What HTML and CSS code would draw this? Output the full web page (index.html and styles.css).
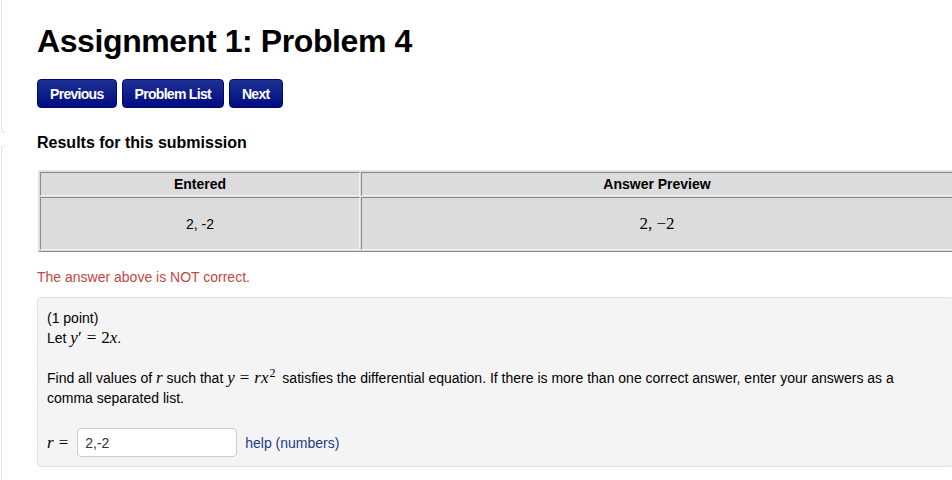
FILE: index.html
```html
<!DOCTYPE html>
<html lang="en">
<head>
<meta charset="utf-8">
<title>Assignment 1: Problem 4</title>
<link rel="stylesheet" href="styles.css">
</head>
<body>
<div class="page">
  <div class="rail">
    <div class="rail-top"></div>
    <div class="rail-bottom"></div>
  </div>
  <main class="content">
    <h1 class="title">Assignment 1: Problem 4</h1>
    <nav class="buttons">
      <a class="btn" href="#">Previous</a>
      <a class="btn" href="#">Problem List</a>
      <a class="btn" href="#">Next</a>
    </nav>
    <h2 class="subtitle">Results for this submission</h2>
    <table class="results">
      <thead>
        <tr><th class="col-entered">Entered</th><th>Answer Preview</th></tr>
      </thead>
      <tbody>
        <tr><td>2, -2</td><td><span class="math">2, &minus;2</span></td></tr>
      </tbody>
    </table>
    <p class="incorrect">The answer above is NOT correct.</p>
    <div class="problem">
      <p class="para">(1 point)<br>Let <span class="math"><span class="mi">y</span>&prime;<span class="mo">=</span>2<span class="mi">x</span></span>.</p>
      <p class="para">Find all values of <span class="math"><span class="mi">r</span></span> such that <span class="math"><span class="mi">y</span><span class="mo">=</span><span class="mi">rx</span><sup class="sup">2</sup></span> satisfies the differential equation. If there is more than one correct answer, enter your answers as a<br>comma separated list.</p>
      <div class="answer-row">
        <span class="math"><span class="mi">r</span><span class="mo mo-last">=</span></span>
        <input class="answer" type="text" value="2,-2">
        <a class="help" href="#">help (numbers)</a>
      </div>
    </div>
  </main>
</div>
</body>
</html>
```
FILE: styles.css
```css
html, body {
  margin: 0;
  overflow: hidden;
  background: #fff;
}
body {
  font-family: "Liberation Sans", Arial, Helvetica, sans-serif;
  color: #000;
}
.page {
  display: grid;
  grid-template-columns: 37px 915px;
  min-height: 480px;
}
.rail {
  display: flex;
  flex-direction: column;
  gap: 12px;
  padding-left: 1px;
}
.rail-top {
  height: 132px;
  width: 3px;
  border-left: 1px solid #e3e3e3;
  border-bottom: 1px solid #e3e3e3;
  border-bottom-left-radius: 4px;
}
.rail-bottom {
  flex: 1;
  width: 3px;
  border-left: 1px solid #e3e3e3;
  border-top: 1px solid #e3e3e3;
  border-top-left-radius: 4px;
}
.content {
  min-width: 0;
}
.title {
  margin: 0;
  padding-top: 23px;
  font-size: 32px;
  line-height: 37px;
  font-weight: bold;
  letter-spacing: -0.4px;
}
.buttons {
  display: flex;
  gap: 5px;
  margin-top: 19px;
}
.btn {
  display: flex;
  align-items: center;
  box-sizing: border-box;
  height: 29px;
  padding: 0 12px;
  color: #fff;
  font-size: 14px;
  font-weight: bold;
  letter-spacing: -0.7px;
  text-decoration: none;
  background: linear-gradient(#1f3196, #000b80);
  border: 1px solid #000a6e;
  border-radius: 4px;
}
.subtitle {
  margin: 26px 0 0;
  font-size: 16px;
  line-height: 18px;
  font-weight: bold;
}
.results {
  margin: 18px 0 0 1px;
  width: 917px;
  border-collapse: separate;
  border-spacing: 1px;
  border: 1px solid;
  border-color: #e6e6e6 #8a8a8a #8a8a8a #e6e6e6;
  background: #dcdcdc;
  font-size: 14px;
}
.results th,
.results td {
  border: 1px solid;
  border-color: #8a8a8a #f2f2f2 #f2f2f2 #8a8a8a;
  background: #dcdcdc;
  text-align: center;
  padding: 0;
}
.results th {
  height: 22px;
  line-height: 21px;
  font-weight: bold;
}
.results td {
  height: 51px;
}
.results .col-entered {
  width: 318px;
}
.incorrect {
  margin: 15px 0 0;
  font-size: 14px;
  line-height: 20px;
  color: #c4463f;
}
.problem {
  box-sizing: border-box;
  width: 917px;
  margin-top: 10px;
  padding: 10px 9px 9px;
  background: #f4f4f4;
  border: 1px solid #e3e3e3;
  border-radius: 4px;
  font-size: 14px;
  line-height: 20px;
}
.para {
  margin: 0 0 20px;
}
.math {
  font-family: "Liberation Serif", "Times New Roman", serif;
  font-size: 17px;
  line-height: 1;
}
.mi {
  font-style: italic;
}
.mo {
  margin: 0 5px;
}
.sup {
  font-size: 12px;
  line-height: 0;
  vertical-align: 6px;
  margin-left: 1px;
  margin-right: 3px;
}
.answer-row {
  display: flex;
  align-items: center;
}
.answer-row .mo-last {
  margin-right: 9px;
}
.answer {
  box-sizing: border-box;
  width: 160px;
  height: 29px;
  padding: 0 7px;
  border: 1px solid #cccccc;
  border-radius: 4px;
  background: #fff;
  font-family: "Liberation Sans", Arial, sans-serif;
  font-size: 14px;
  color: #333;
}
.help {
  margin-left: 8px;
  color: #1d3a8a;
  text-decoration: none;
}
```
